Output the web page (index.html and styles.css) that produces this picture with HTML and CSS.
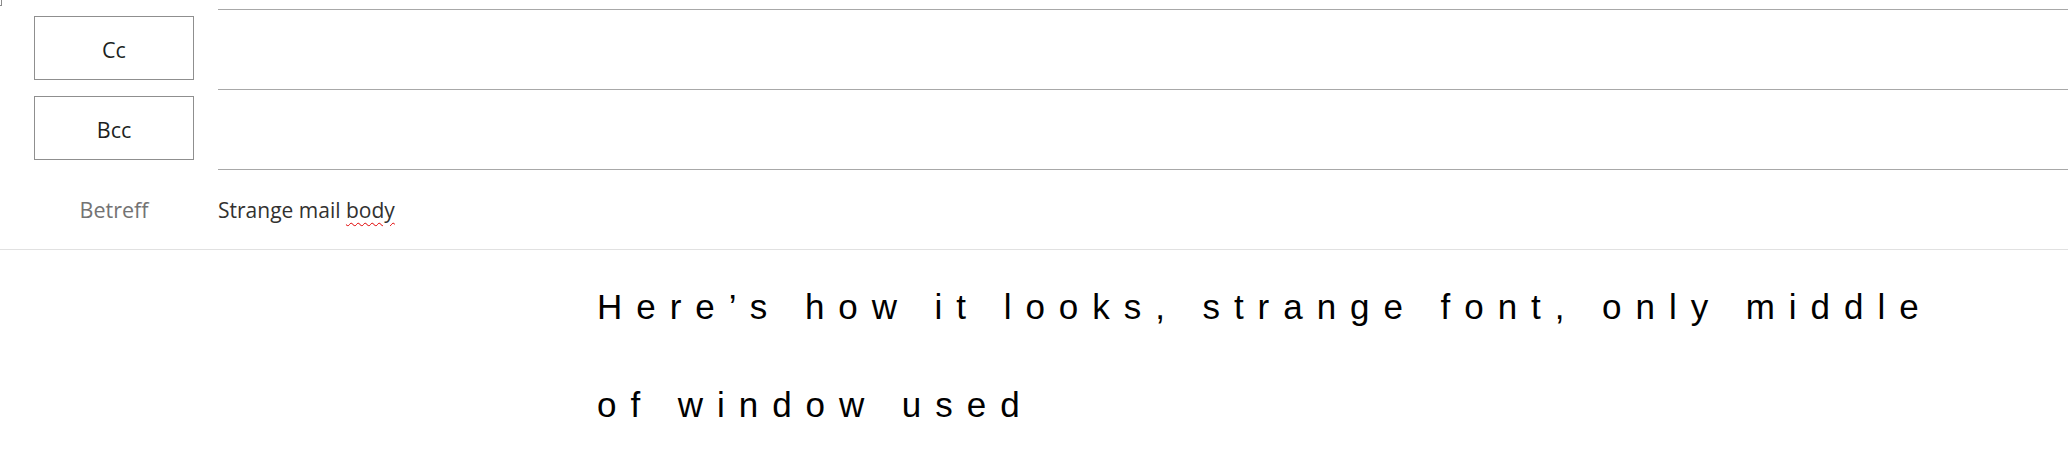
FILE: index.html
```html
<!DOCTYPE html>
<html lang="de">
<head>
<meta charset="utf-8">
<title>Mail compose</title>
<link rel="stylesheet" href="styles.css">
</head>
<body>
<div class="compose">
  <div class="header">
    <div class="row tail">
      <div class="label"><span class="corner"></span></div>
      <div class="field"></div>
    </div>
    <div class="row recipient">
      <div class="label"><button class="pick">Cc</button></div>
      <div class="field"></div>
    </div>
    <div class="row recipient">
      <div class="label"><button class="pick">Bcc</button></div>
      <div class="field"></div>
    </div>
    <div class="row subject">
      <div class="label subject-label">Betreff</div>
      <div class="field subject-field">Strange mail <span class="misspelled">body</span></div>
    </div>
  </div>
  <div class="body">
    <p class="message">Here’s how it looks, strange font, only middle of window used</p>
  </div>
</div>
</body>
</html>
```
FILE: styles.css
```css
html, body {
  margin: 0;
  padding: 0;
  background: #ffffff;
}

body {
  font-family: "Open Sans", "Noto Sans", sans-serif;
  width: 2068px;
  overflow: hidden;
}

.row {
  display: flex;
}

.label {
  width: 218px;
  flex: none;
  box-sizing: border-box;
  padding-left: 34px;
}

.field {
  flex: 1;
  border-bottom: 1px solid #a8a8a8;
}

.tail {
  height: 10px;
}

.tail .label {
  padding-left: 0;
}

.corner {
  display: block;
  width: 1px;
  height: 5px;
  border-right: 1px solid #8a8a8a;
  border-bottom: 1px solid #8a8a8a;
}

.recipient {
  height: 80px;
}

.recipient .label {
  padding-top: 6px;
}

.pick {
  display: flex;
  align-items: center;
  justify-content: center;
  box-sizing: border-box;
  width: 160px;
  height: 64px;
  padding: 4px 0 0 0;
  margin: 0;
  background: #ffffff;
  border: 1px solid #8f8f8f;
  font-family: "Open Sans", "Noto Sans", sans-serif;
  font-size: 21.5px;
  line-height: 28px;
  color: #201f1e;
}

.subject {
  height: 79px;
  align-items: center;
  border-bottom: 1px solid #e1e1e1;
}

.subject-label {
  width: 218px;
  padding-right: 24px;
  text-align: center;
  font-size: 21.5px;
  line-height: 28px;
  color: #737373;
}

.subject-field {
  border-bottom: none;
  font-size: 21px;
  line-height: 28px;
  color: #323130;
}

.misspelled {
  text-decoration: underline wavy #e00000;
  text-decoration-thickness: 1px;
  text-underline-offset: 4px;
}

.body {
  padding: 8px 0 0 597px;
}

.message {
  margin: 0;
  width: 1370px;
  font-family: "Liberation Sans", Arial, sans-serif;
  font-size: 35px;
  line-height: 98px;
  letter-spacing: 13.95px;
  color: #000000;
}
```
